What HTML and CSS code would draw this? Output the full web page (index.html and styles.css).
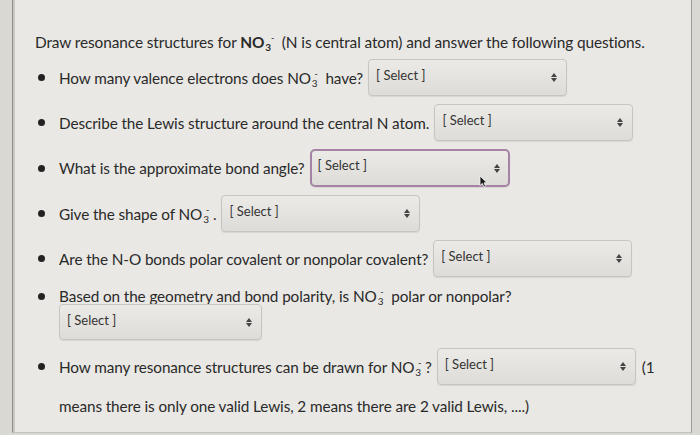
FILE: index.html
```html
<!DOCTYPE html>
<html>
<head>
<meta charset="utf-8">
<link rel="stylesheet" href="styles.css">
</head>
<body>
<div class="page">
  <div class="panel">
    <p class="title">Draw resonance structures for <b>NO<sub>3</sub></b><sup>-</sup> (N is central atom) and answer the following questions.</p>
    <ul class="qs">
      <li class="q">
        <span class="dot"></span>
        <span class="txt">How many valence electrons does NO<sub>3</sub><sup>-</sup> have?</span>
        <span class="sel"><span class="lbl">[ Select ]</span><span class="arr"></span></span>
      </li>
      <li class="q">
        <span class="dot"></span>
        <span class="txt">Describe the Lewis structure around the central N atom.</span>
        <span class="sel"><span class="lbl">[ Select ]</span><span class="arr"></span></span>
      </li>
      <li class="q">
        <span class="dot"></span>
        <span class="txt">What is the approximate bond angle?</span>
        <span class="sel focus"><span class="lbl">[ Select ]</span><span class="arr"></span>
          <svg class="cursor" width="9" height="13" viewBox="0 0 9 13"><path d="M1 1 L1 10.5 L3.3 8.4 L5 12 L6.6 11.3 L5 7.8 L8 7.8 Z" fill="#1a1a1a" stroke="#f4f4f4" stroke-width="0.8"/></svg>
        </span>
      </li>
      <li class="q">
        <span class="dot"></span>
        <span class="txt">Give the shape of NO<sub>3</sub><sup>-</sup>.</span>
        <span class="sel"><span class="lbl">[ Select ]</span><span class="arr"></span></span>
      </li>
      <li class="q">
        <span class="dot"></span>
        <span class="txt">Are the N-O bonds polar covalent or nonpolar covalent?</span>
        <span class="sel"><span class="lbl">[ Select ]</span><span class="arr"></span></span>
      </li>
      <li class="q stack">
        <div class="line">
          <span class="dot"></span>
          <span class="txt">Based on the geometry and bond polarity, is NO<sub>3</sub><sup>-</sup> polar or nonpolar?</span>
        </div>
        <span class="sel below"><span class="lbl">[ Select ]</span><span class="arr"></span></span>
      </li>
      <li class="q stack">
        <div class="line">
          <span class="dot"></span>
          <span class="txt">How many resonance structures can be drawn for NO<sub>3</sub><sup>-</sup>?</span>
          <span class="sel"><span class="lbl">[ Select ]</span><span class="arr"></span></span>
          <span class="txt after">(1</span>
        </div>
        <p class="cont">means there is only one valid Lewis, 2 means there are 2 valid Lewis, ....)</p>
      </li>
    </ul>
  </div>
</div>
</body>
</html>
```
FILE: styles.css
```css
html, body {
  margin: 0;
  padding: 0;
}
body {
  width: 700px;
  height: 435px;
  overflow: hidden;
  background: #d9d8d3;
  font-family: Lato, "Open Sans", sans-serif;
  color: #2a2a2a;
}
.page {
  display: flex;
  height: 435px;
  padding-left: 12px;
}
.panel {
  width: 680px;
  height: 433px;
  background: #e9e8e4;
  border-left: 1px solid #8e8e89;
  box-shadow: inset 2px 0 0 #c9c9c3;
  border-right: 1px solid #9c9c96;
  border-bottom: 1px solid #c2c2bc;
  padding: 32px 0 0 22px;
  box-sizing: border-box;
}
.title {
  margin: 0;
  font-size: 15.4px;
  line-height: 20px;
  letter-spacing: -0.1px;
}
.title b {
  font-weight: 700;
}
sub {
  font-size: 10px;
  line-height: 0;
  vertical-align: -3px;
  margin-left: 1px;
}
sup {
  display: inline-block;
  width: 5px;
  font-size: 9px;
  line-height: 0;
  vertical-align: 7px;
  margin-left: -3px;
  margin-right: 2px;
}
.title sup {
  margin-left: 0;
}
.qs {
  list-style: none;
  margin: 7px 0 0 0;
  padding: 0;
  display: flex;
  flex-direction: column;
  gap: 8px;
}
.q {
  display: flex;
  align-items: center;
  font-size: 15.3px;
  line-height: 20px;
}
.q.stack {
  flex-direction: column;
  align-items: flex-start;
}
.q.stack:nth-child(6) {
  margin-top: 3px;
}
.line {
  display: flex;
  align-items: center;
}
.dot {
  width: 7px;
  height: 7px;
  border-radius: 50%;
  background: #222;
  margin: 0 14px 0 3px;
  flex: none;
}
.txt {
  white-space: nowrap;
  letter-spacing: -0.1px;
}
.txt.after {
  margin-left: 6px;
}
.stack .line .txt {
  line-height: 16px;
}
.sel {
  position: relative;
  display: flex;
  align-items: flex-start;
  justify-content: space-between;
  width: 199px;
  height: 37px;
  box-sizing: border-box;
  margin-left: 5px;
  padding: 7px 9px 0 7px;
  background: linear-gradient(#ebeae6, #dedcd8);
  border: 1px solid #c6c5c0;
  border-radius: 4px;
  box-shadow: 0 1px 1px rgba(0, 0, 0, 0.08);
  flex: none;
}
.sel.focus {
  width: 200px;
  height: 38px;
  border: 2px solid #a483a6;
  border-radius: 5px;
  padding: 6px 8px 0 6px;
}
.sel.below {
  margin-left: 24px;
  width: 203px;
  height: 36px;
}
.lbl {
  font-size: 13px;
  line-height: 16px;
  color: #333;
}
.arr {
  align-self: center;
  width: 6px;
  height: 9px;
  position: relative;
  margin-top: -7px;
}
.sel.focus .arr {
  margin-top: -6px;
}
.arr::before, .arr::after {
  content: "";
  position: absolute;
  left: 0;
  border-left: 3px solid transparent;
  border-right: 3px solid transparent;
}
.arr::before {
  top: 0;
  border-bottom: 4px solid #444;
}
.arr::after {
  bottom: 0;
  border-top: 4px solid #444;
}
.cursor {
  position: absolute;
  left: 167px;
  top: 24px;
}
.cont {
  margin: 11px 0 0 24px;
  font-size: 15.3px;
  line-height: 20px;
  letter-spacing: -0.1px;
}
```
